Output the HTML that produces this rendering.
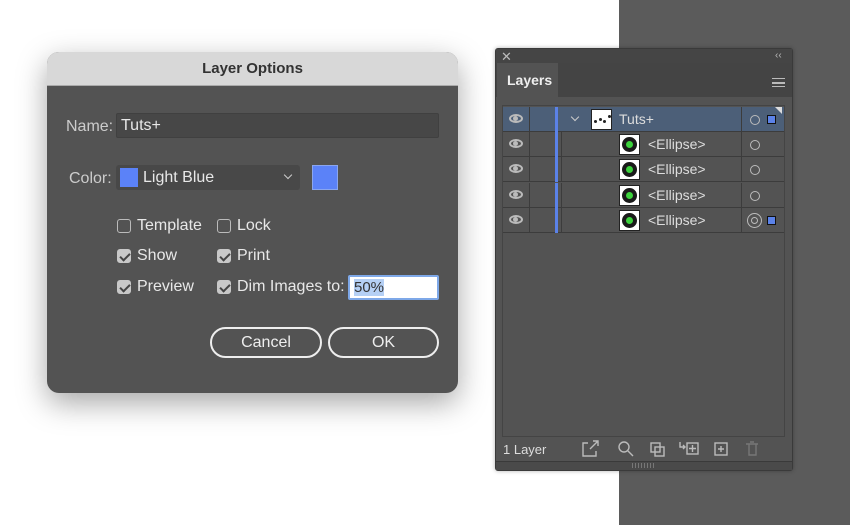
<!DOCTYPE html>
<html><head><style>
*{margin:0;padding:0;box-sizing:border-box}
body{width:850px;height:525px;position:relative;overflow:hidden;background:#fff;font-family:"Liberation Sans",sans-serif}
.a{position:absolute}
.t{color:#e8e8e8;font-size:16px;white-space:nowrap}
.cb{position:absolute;width:14px;height:14px;border:1px solid #bbb;border-radius:3px}
.cbc{background:#c8c8c8;border-color:#c8c8c8}
.cbc:after{content:"";position:absolute;left:4px;top:1px;width:4px;height:8px;border:solid #444;border-width:0 2px 2px 0;transform:rotate(45deg)}
.row{position:absolute;left:503px;width:281px;height:25px;border-bottom:1px solid #3c3c3c}
.eye{position:absolute;left:6px;top:7px;width:14px;height:9px;border:2px solid #bbb;border-radius:50%}
.eye:after{content:"";position:absolute;left:2px;top:0px;width:5px;height:5px;background:#bbb;border-radius:50%}
.bar{position:absolute;left:52px;top:0;width:3px;height:25px;background:#5b82e8}
.vs{position:absolute;top:0;height:25px;width:1px;background:#3c3c3c}
.th{position:absolute;left:116px;top:2px;width:21px;height:21px;background:#fff;border:1px solid #222}
.th i{position:absolute;left:2px;top:2px;width:15px;height:15px;border-radius:50%;background:#1a1a1a}
.th i:after{content:"";position:absolute;left:4px;top:4px;width:7px;height:7px;border-radius:50%;background:#3cd23c}
.nm{position:absolute;left:145px;top:4px;color:#ddd;font-size:14px}
.ci{position:absolute;left:247px;top:8px;width:10px;height:10px;border:1.5px solid #bbb;border-radius:50%}
.sq{position:absolute;left:264px;top:8px;width:9px;height:9px;background:#5b82e8;border:1px solid #111}
.btn{position:absolute;height:31px;border:2px solid #eee;border-radius:16px;color:#eee;font-size:16px;text-align:center;line-height:28px}
</style></head><body>
<div class="a" style="left:619px;top:0;width:231px;height:525px;background:#5b5b5b"></div>

<div class="a" style="left:47px;top:52px;width:411px;height:341px;background:#535353;border-radius:12px;box-shadow:0 10px 30px rgba(0,0,0,.35);overflow:hidden">
 <div class="a" style="left:0;top:0;width:411px;height:34px;background:#d8d8d8;border-bottom:1px solid #aaa;text-align:center;font-weight:bold;font-size:15px;color:#333;line-height:34px">Layer Options</div>
</div>
<div class="a t" style="left:66px;top:118px;color:#ccc">Name:</div>
<div class="a" style="left:116px;top:113px;width:323px;height:25px;background:#474747;border:1px solid #404040;border-radius:2px"></div>
<div class="a t" style="left:121px;top:117px">Tuts+</div>
<div class="a t" style="left:69px;top:170px;color:#ccc">Color:</div>
<div class="a" style="left:116px;top:165px;width:184px;height:25px;background:#484848;border-radius:3px"></div>
<div class="a" style="left:120px;top:168px;width:18px;height:19px;background:#5b82f8"></div>
<div class="a t" style="left:143px;top:169px">Light Blue</div>
<div class="a" style="left:285px;top:172px;width:6px;height:6px;border:solid #ccc;border-width:0 1.5px 1.5px 0;transform:rotate(45deg)"></div>
<div class="a" style="left:312px;top:165px;width:26px;height:25px;background:#5b82f8;border:1px solid #8aa6ef"></div>

<div class="cb" style="left:117px;top:219px"></div><div class="a t" style="left:137px;top:217px">Template</div>
<div class="cb" style="left:217px;top:219px"></div><div class="a t" style="left:237px;top:217px">Lock</div>
<div class="cb cbc" style="left:117px;top:249px"></div><div class="a t" style="left:137px;top:247px">Show</div>
<div class="cb cbc" style="left:217px;top:249px"></div><div class="a t" style="left:237px;top:247px">Print</div>
<div class="cb cbc" style="left:117px;top:280px"></div><div class="a t" style="left:137px;top:278px">Preview</div>
<div class="cb cbc" style="left:217px;top:280px"></div><div class="a t" style="left:237px;top:278px">Dim Images to:</div>
<div class="a" style="left:348px;top:275px;width:91px;height:25px;background:#fff;border:2px solid #7ea8e8;border-radius:2px"></div>
<div class="a" style="left:354px;top:279px;font-size:15px;color:#333;background:#b5d0f5">50%</div>
<div class="btn" style="left:210px;top:327px;width:112px">Cancel</div>
<div class="btn" style="left:328px;top:327px;width:111px">OK</div>

<div class="a" style="left:495px;top:48px;width:298px;height:423px;background:#535353;border:1px solid #3a3a3a;border-radius:3px;box-shadow:0 0 4px rgba(0,0,0,.3)"></div>
<div class="a" style="left:496px;top:49px;width:296px;height:14px;background:#454545"></div>
<div class="a" style="left:501px;top:49px;color:#bbb;font-size:13px">✕</div>
<div class="a" style="left:775px;top:50px;color:#bbb;font-size:10px">‹‹</div>
<div class="a" style="left:496px;top:63px;width:296px;height:34px;background:#444"></div>
<div class="a" style="left:497px;top:63px;width:61px;height:36px;background:#535353"></div>
<div class="a" style="left:507px;top:72px;color:#eee;font-size:14px;font-weight:bold">Layers</div>
<div class="a" style="left:772px;top:78px;width:13px;height:9px;border-top:1.5px solid #bbb;border-bottom:1.5px solid #bbb"></div>
<div class="a" style="left:772px;top:82px;width:13px;height:1.5px;background:#bbb"></div>
<div class="a" style="left:502px;top:105px;width:283px;height:332px;border:1px solid #444"></div>

<div class="row" style="top:107px;background:#4c5f78">
 <div class="eye"></div><div class="vs" style="left:26px"></div><div class="bar"></div>
 <div class="a" style="left:69px;top:7px;width:6px;height:6px;border:solid #ccc;border-width:0 1.5px 1.5px 0;transform:rotate(45deg)"></div>
 <div class="a" style="left:88px;top:2px;width:21px;height:21px;background:#fff;border:1px solid #222">
  <i class="a" style="left:2px;top:10px;width:3px;height:3px;background:#222;border-radius:50%"></i>
  <i class="a" style="left:7px;top:8px;width:3px;height:3px;background:#222;border-radius:50%"></i>
  <i class="a" style="left:11px;top:10px;width:3px;height:3px;background:#222;border-radius:50%"></i>
  <i class="a" style="left:16px;top:5px;width:3px;height:3px;background:#222;border-radius:50%"></i></div>
 <div class="nm" style="left:116px">Tuts+</div>
 <div class="vs" style="left:238px"></div><div class="ci"></div><div class="sq"></div>
 <div class="a" style="left:272px;top:0;width:0;height:0;border-top:7px solid #ddd;border-left:7px solid transparent"></div>
</div>
<div class="row" style="top:132px"><div class="eye"></div><div class="vs" style="left:26px"></div><div class="bar"></div><div class="vs" style="left:58px"></div><div class="th"><i></i></div><div class="nm">&lt;Ellipse&gt;</div><div class="vs" style="left:238px"></div><div class="ci"></div></div>
<div class="row" style="top:157px"><div class="eye"></div><div class="vs" style="left:26px"></div><div class="bar"></div><div class="vs" style="left:58px"></div><div class="th"><i></i></div><div class="nm">&lt;Ellipse&gt;</div><div class="vs" style="left:238px"></div><div class="ci"></div></div>
<div class="row" style="top:183px"><div class="eye"></div><div class="vs" style="left:26px"></div><div class="bar"></div><div class="vs" style="left:58px"></div><div class="th"><i></i></div><div class="nm">&lt;Ellipse&gt;</div><div class="vs" style="left:238px"></div><div class="ci"></div></div>
<div class="row" style="top:208px"><div class="eye"></div><div class="vs" style="left:26px"></div><div class="bar"></div><div class="vs" style="left:58px"></div><div class="th"><i></i></div><div class="nm">&lt;Ellipse&gt;</div><div class="vs" style="left:238px"></div>
 <div class="a" style="left:244px;top:5px;width:15px;height:15px;border:1.5px solid #bbb;border-radius:50%"></div><div class="ci" style="left:248px;top:9px;width:7px;height:7px"></div><div class="sq"></div></div>

<div class="a" style="left:503px;top:442px;color:#ddd;font-size:13px">1 Layer</div>
<svg class="a" style="left:580px;top:438px" width="190" height="20" fill="none" stroke="#bbb" stroke-width="1.4">
 <path d="M8 5H3v13h13v-5M10 11l8-8M13 3h5v5"/>
 <circle cx="44" cy="9" r="5"/><path d="M48 13l5 5"/>
 <rect x="71" y="5" width="9" height="9"/><rect x="75" y="9" width="9" height="9"/>
 <path d="M100 4v5h5M103 7l2 2-2 2"/><rect x="107" y="5" width="11" height="11"/><path d="M112.5 7v7M109 10.5h7"/>
 <rect x="135" y="5" width="12" height="12"/><path d="M141 8v6M138 11h6"/>
 <path stroke="#777" d="M166 6h12M169 6v11h7V6M170 4h4"/>
</svg>
<div class="a" style="left:496px;top:461px;width:296px;height:9px;background:#4a4a4a;border-top:1px solid #3a3a3a"></div>
<div class="a" style="left:632px;top:463px;width:24px;height:5px;background:repeating-linear-gradient(90deg,#777 0 1px,transparent 1px 3px)"></div>
</body></html>
